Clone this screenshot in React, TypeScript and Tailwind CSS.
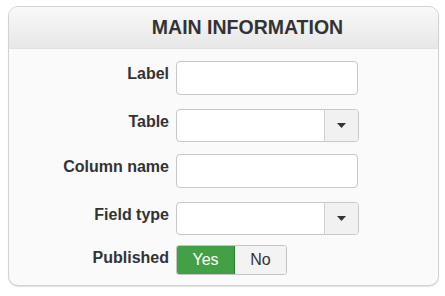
import React from "react";

const font = { fontFamily: '"Liberation Sans", Arial, sans-serif' };

function Caret() {
  return (
    <svg width="9" height="5" viewBox="0 0 9 5" className="block">
      <path d="M0 0 L9 0 L4.5 5 Z" fill="#333" />
    </svg>
  );
}

function Label({ children }: { children: React.ReactNode }) {
  return (
    <div className="w-[167px] shrink-0 pr-[7px] pt-[3px] text-right text-[16px] font-bold leading-[20px] text-[#333]">
      {children}
    </div>
  );
}

function TextInput() {
  return <div className="h-[34px] w-[182px] rounded-[4px] border border-[#c8c8c8] bg-white" />;
}

function SelectInput() {
  return (
    <div className="flex h-[33px] w-[183px] overflow-hidden rounded-[4px] border border-[#c8c8c8] bg-white">
      <div className="flex-1" />
      <div className="flex w-[34px] items-center justify-center border-l border-[#d0d0d0] bg-[#f1f1f1]">
        <Caret />
      </div>
    </div>
  );
}

export default function App() {
  return (
    <div className="min-h-[296px] w-[445px] bg-white pl-[8px] pt-[6px]" style={font}>
      <div className="w-[431px] overflow-hidden rounded-[10px] border border-[#d2d2d2] bg-[#fafafa] shadow-[0_1px_1px_rgba(0,0,0,0.12)]">
        <div className="flex h-[42px] items-center justify-center border-b border-[#e2e2e2] bg-gradient-to-b from-[#f9f9f9] to-[#e7e7e7] pl-[48px]">
          <span className="text-[19.5px] font-bold text-[#333]">MAIN INFORMATION</span>
        </div>
        <div className="flex flex-col pb-[10px] pt-[12px]">
          <div className="flex">
            <Label>Label</Label>
            <TextInput />
          </div>
          <div className="mt-[14px] flex">
            <Label>Table</Label>
            <SelectInput />
          </div>
          <div className="mt-[12px] flex">
            <Label>Column name</Label>
            <TextInput />
          </div>
          <div className="mt-[14px] flex">
            <Label>Field type</Label>
            <SelectInput />
          </div>
          <div className="mt-[10px] flex">
            <Label>Published</Label>
            <div className="flex h-[30px] overflow-hidden rounded-[3px] border border-[#c4c4c4]">
              <div className="flex w-[58px] items-center justify-center border-r border-[#2f7d33] bg-[#43a047] text-[16px] text-white">
                Yes
              </div>
              <div className="flex w-[51px] items-center justify-center bg-[#f3f3f3] text-[16px] text-[#333]">
                No
              </div>
            </div>
          </div>
        </div>
      </div>
    </div>
  );
}
